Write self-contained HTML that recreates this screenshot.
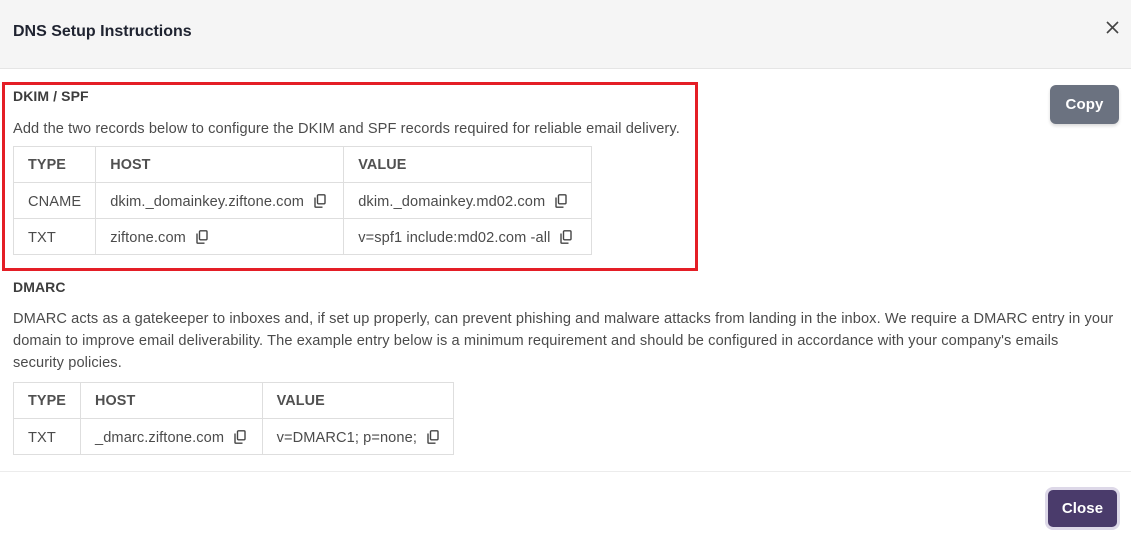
<!DOCTYPE html>
<html><head><meta charset="utf-8"><style>
*{box-sizing:border-box;margin:0;padding:0}
body{width:1131px;height:540px;background:#fff;font-family:"Liberation Sans",sans-serif;color:#4b4b4b;font-size:14.6px;position:relative;overflow:hidden;letter-spacing:0.1px}
.hdr{position:absolute;left:0;top:0;width:1131px;height:69px;background:#f5f5f5;border-bottom:1px solid #e5e5e5}
.title{position:absolute;left:13px;top:23px;font-size:16px;font-weight:bold;color:#1f2330;letter-spacing:0}
.x{position:absolute;left:1105px;top:20px}
.red{position:absolute;left:2px;top:82px;width:696px;height:189px;border:3px solid #e41e26}
.abs{position:absolute;white-space:nowrap}
h4{position:absolute;font-size:14px;font-weight:bold;color:#3d3d3d}
table{position:absolute;border-collapse:collapse}
td,th{border:1px solid #dedede;padding:3px 14px 0;height:36px;text-align:left;font-size:14.6px;white-space:nowrap}
th{font-weight:bold;color:#505050;font-size:14.4px;padding-top:1px}
td{color:#4b4b4b}
.ic{display:inline-block;vertical-align:-2px;margin-left:10px}
.copy{position:absolute;left:1050px;top:85px;width:69px;height:39px;background:#6b7280;border-radius:6px;color:#fff;font-weight:bold;font-size:15px;text-align:center;line-height:40px;box-shadow:0 2px 3px rgba(0,0,0,.15)}
.foot{position:absolute;left:0;top:471px;width:1131px;border-top:1px solid #ececec}
.close{position:absolute;left:1045px;top:487px;width:75px;height:43px;background:#4a3b6b;border:3px solid #ddd8e8;border-radius:8px;color:#fff;font-weight:bold;font-size:15px;text-align:center;line-height:38px}
</style></head><body>
<div class="hdr"><div class="title">DNS Setup Instructions</div>
<svg class="x" width="15" height="15" viewBox="0 0 15 15"><path d="M2 2L13 13M13 2L2 13" stroke="#444" stroke-width="1.6"/></svg></div>
<div class="red"></div>
<h4 style="left:13px;top:88px">DKIM / SPF</h4>
<div class="abs" style="left:13px;top:121px">Add the two records below to configure the DKIM and SPF records required for reliable email delivery.</div>
<table style="left:13px;top:146px;width:579px">
<tr><th style="width:82px">TYPE</th><th style="width:248px">HOST</th><th>VALUE</th></tr>
<tr><td>CNAME</td><td>dkim._domainkey.ziftone.com<svg class="ic" width="12" height="14" viewBox="0 0 12 14"><rect x="3.5" y="0.8" width="7.5" height="9" rx="1" fill="none" stroke="#444" stroke-width="1.4"/><path d="M1 3.5V12.5a.7.7 0 0 0 .7.7H8.5" fill="none" stroke="#444" stroke-width="1.4"/></svg></td><td>dkim._domainkey.md02.com<svg class="ic" width="12" height="14" viewBox="0 0 12 14"><rect x="3.5" y="0.8" width="7.5" height="9" rx="1" fill="none" stroke="#444" stroke-width="1.4"/><path d="M1 3.5V12.5a.7.7 0 0 0 .7.7H8.5" fill="none" stroke="#444" stroke-width="1.4"/></svg></td></tr>
<tr><td>TXT</td><td>ziftone.com<svg class="ic" width="12" height="14" viewBox="0 0 12 14"><rect x="3.5" y="0.8" width="7.5" height="9" rx="1" fill="none" stroke="#444" stroke-width="1.4"/><path d="M1 3.5V12.5a.7.7 0 0 0 .7.7H8.5" fill="none" stroke="#444" stroke-width="1.4"/></svg></td><td>v=spf1 include:md02.com -all<svg class="ic" width="12" height="14" viewBox="0 0 12 14"><rect x="3.5" y="0.8" width="7.5" height="9" rx="1" fill="none" stroke="#444" stroke-width="1.4"/><path d="M1 3.5V12.5a.7.7 0 0 0 .7.7H8.5" fill="none" stroke="#444" stroke-width="1.4"/></svg></td></tr>
</table>
<h4 style="left:13px;top:279px">DMARC</h4>
<div class="abs" style="left:13px;top:308px;line-height:22px">DMARC acts as a gatekeeper to inboxes and, if set up properly, can prevent phishing and malware attacks from landing in the inbox. We require a DMARC entry in your<br>domain to improve email deliverability. The example entry below is a minimum requirement and should be configured in accordance with your company's emails<br>security policies.</div>
<table style="left:13px;top:382px;width:441px">
<tr><th style="width:67px">TYPE</th><th style="width:183px">HOST</th><th>VALUE</th></tr>
<tr><td>TXT</td><td>_dmarc.ziftone.com<svg class="ic" width="12" height="14" viewBox="0 0 12 14"><rect x="3.5" y="0.8" width="7.5" height="9" rx="1" fill="none" stroke="#444" stroke-width="1.4"/><path d="M1 3.5V12.5a.7.7 0 0 0 .7.7H8.5" fill="none" stroke="#444" stroke-width="1.4"/></svg></td><td>v=DMARC1; p=none;<svg class="ic" width="12" height="14" viewBox="0 0 12 14"><rect x="3.5" y="0.8" width="7.5" height="9" rx="1" fill="none" stroke="#444" stroke-width="1.4"/><path d="M1 3.5V12.5a.7.7 0 0 0 .7.7H8.5" fill="none" stroke="#444" stroke-width="1.4"/></svg></td></tr>
</table>
<div class="copy">Copy</div>
<div class="foot"></div>
<div class="close">Close</div>
</body></html>
